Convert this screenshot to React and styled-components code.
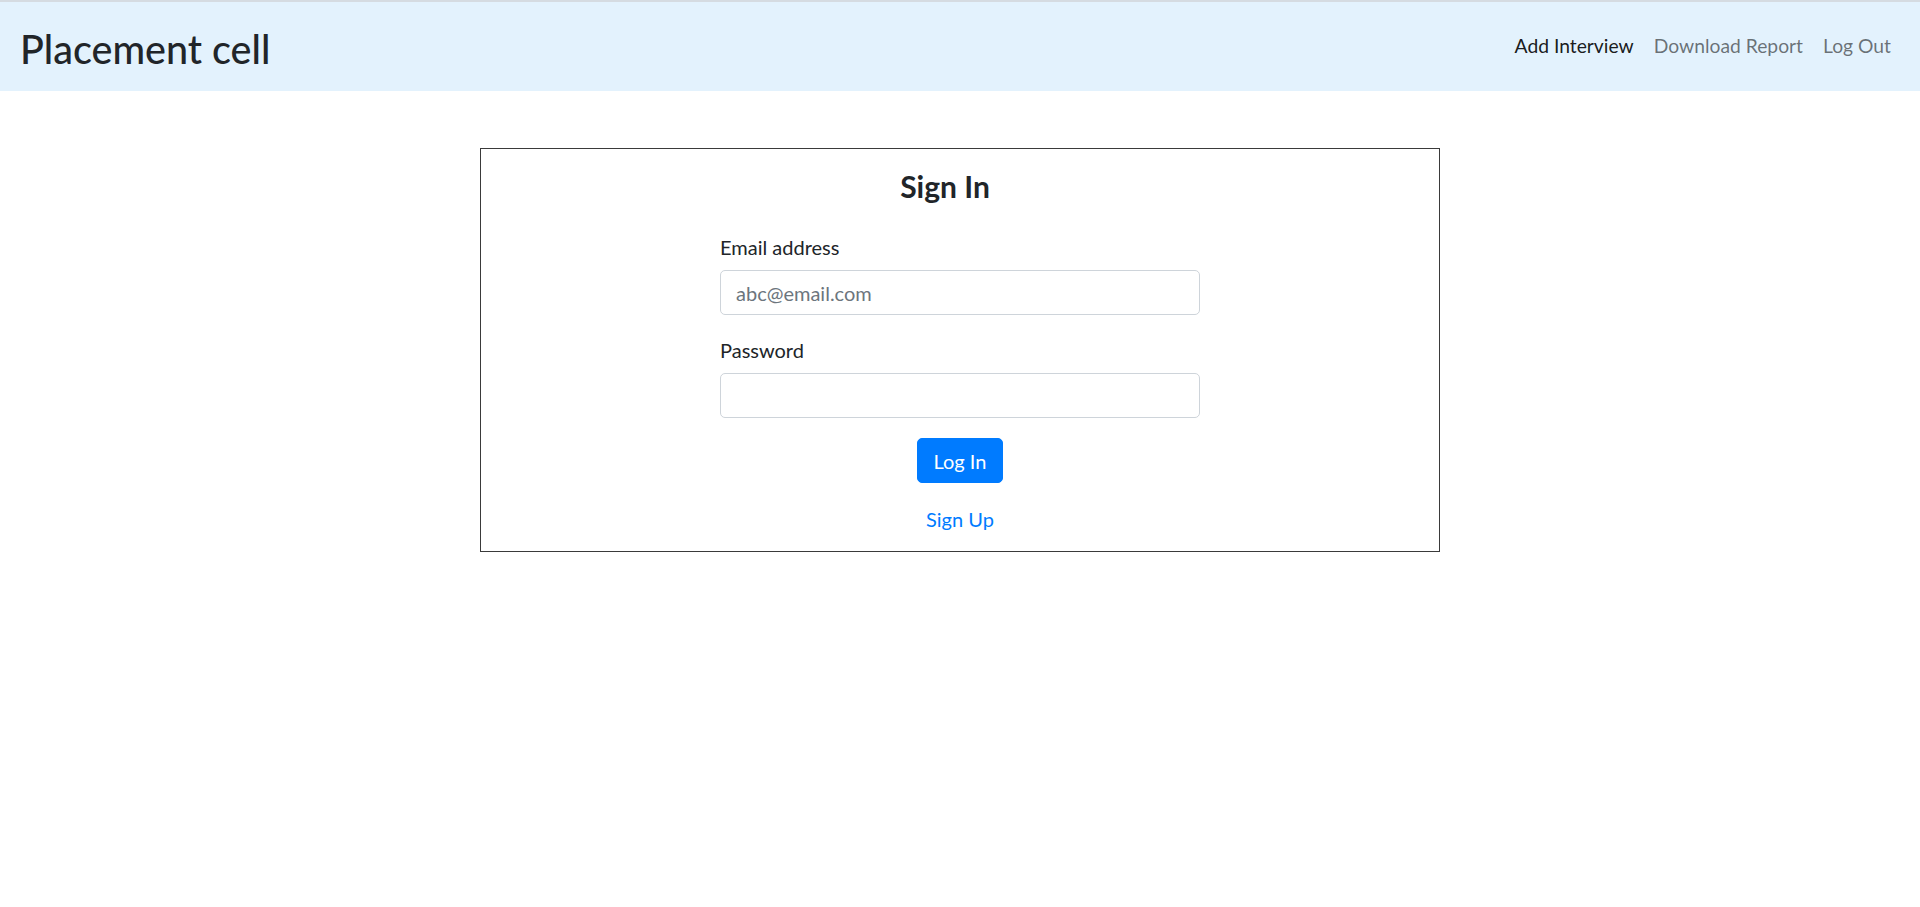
import React from 'react'
import styled, { createGlobalStyle } from 'styled-components'

const GlobalStyle = createGlobalStyle`
  * { box-sizing: border-box; }
  body {
    margin: 0;
    background: #fff;
    color: #212529;
    font-family: Lato, "Open Sans", sans-serif;
    font-size: 20px;
  }
`

const Page = styled.div`
  min-height: 100vh;
  border-top: 2px solid #d5dbe1;
`

const Navbar = styled.nav`
  height: 89px;
  background: #e3f2fd;
  display: flex;
  align-items: center;
  justify-content: space-between;
  padding: 0 19px 0 20px;
`

const Brand = styled.h1`
  margin: 4px 0 0;
  font-size: 39.5px;
  font-weight: 500;
  line-height: 1.2;
  color: #212529;
`

const NavLinks = styled.div`
  display: flex;
  align-items: center;
`

const NavLink = styled.a`
  padding: 0 10px;
  font-size: 19.3px;
  line-height: 1.5;
  text-decoration: none;
  color: ${p => (p.$active ? 'rgba(0, 0, 0, 0.9)' : 'rgba(0, 0, 0, 0.55)')};
  cursor: pointer;
`

const Card = styled.div`
  width: 960px;
  margin: 57px auto 0;
  border: 1px solid #3a3a3a;
  padding: 19px 0 17px;
  display: flex;
  flex-direction: column;
  align-items: center;
`

const Title = styled.h3`
  margin: 0 30px 28px 0;
  font-size: 30px;
  font-weight: 700;
  line-height: 1.2;
`

const Form = styled.form`
  width: 480px;
  display: flex;
  flex-direction: column;
`

const Group = styled.div`
  margin-bottom: 20px;
`

const Label = styled.label`
  display: block;
  margin-bottom: 8px;
  font-size: 20px;
  line-height: 1.5;
`

const Input = styled.input`
  display: block;
  width: 100%;
  height: 45px;
  padding: 0 15px;
  font-family: inherit;
  font-size: 20px;
  color: #212529;
  border: 1px solid #ced4da;
  border-radius: 5px;
  outline: none;

  &::placeholder {
    color: #6c757d;
  }
`

const Button = styled.button`
  align-self: center;
  height: 45px;
  padding: 0 16px;
  font-family: inherit;
  font-size: 20px;
  color: #fff;
  background: #007bff;
  border: 1px solid #007bff;
  border-radius: 5px;
  cursor: pointer;
`

const SignUp = styled.a`
  margin-top: 21px;
  font-size: 20px;
  line-height: 1.5;
  color: #007bff;
  text-decoration: none;
  cursor: pointer;
`

export default function App() {
  return (
    <>
      <GlobalStyle />
      <Page>
        <Navbar>
          <Brand>Placement cell</Brand>
          <NavLinks>
            <NavLink $active>Add Interview</NavLink>
            <NavLink>Download Report</NavLink>
            <NavLink>Log Out</NavLink>
          </NavLinks>
        </Navbar>

        <Card>
          <Title>Sign In</Title>
          <Form onSubmit={e => e.preventDefault()}>
            <Group>
              <Label htmlFor="email">Email address</Label>
              <Input id="email" type="email" placeholder="abc@email.com" />
            </Group>
            <Group>
              <Label htmlFor="password">Password</Label>
              <Input id="password" type="password" />
            </Group>
            <Button type="submit">Log In</Button>
          </Form>
          <SignUp>Sign Up</SignUp>
        </Card>
      </Page>
    </>
  )
}
